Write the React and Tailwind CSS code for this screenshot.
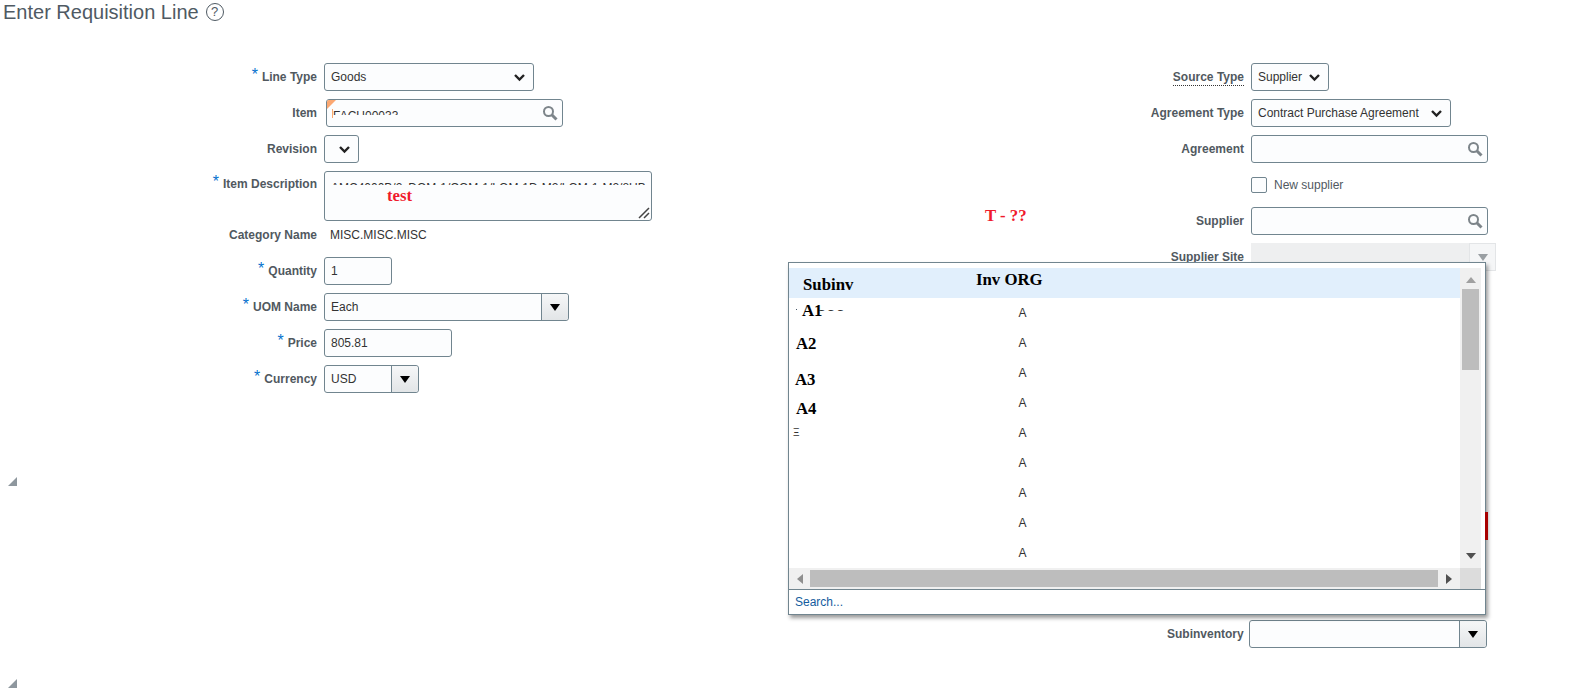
const ctl = "border border-[#71858f] rounded-[3px] bg-[#fcfdfe] h-[28px] flex items-center text-[12px] text-[#333]";

const Chevron = () => (
  <svg width="13" height="9" viewBox="0 0 13 9" className="shrink-0">
    <path d="M2 2 L6.5 6.5 L11 2" fill="none" stroke="#222" strokeWidth="2.4" />
  </svg>
);

const Magnifier = () => (
  <svg width="16" height="16" viewBox="0 0 16 16" className="shrink-0">
    <circle cx="6.5" cy="6.5" r="4.5" fill="none" stroke="#7d858a" strokeWidth="2" />
    <path d="M10 10 L14.5 14.5" stroke="#7d858a" strokeWidth="3" />
  </svg>
);

const Field = ({ label, required, dotted, children, labelClass = "pt-[6px]", className = "h-[28px]" }) => (
  <div className={`flex items-start gap-[7px] ${className}`}>
    <div className={`w-[317px] shrink-0 text-right text-[12px] leading-[16px] font-bold text-[#51595f] ${labelClass}`}>
      {required && <span className="text-[#0572ce] text-[16px] leading-[10px] font-normal mr-[4px] align-[1px]">*</span>}
      <span className={dotted ? "border-b border-dotted border-[#333] pb-[1px]" : ""}>{label}</span>
    </div>
    {children}
  </div>
);

const SelectBox = ({ value, w }) => (
  <div className={`${ctl} ${w} justify-between pl-[6px] pr-[7px]`}>
    <span>{value}</span>
    <Chevron />
  </div>
);

const SearchBox = ({ w, children }) => (
  <div className={`${ctl} ${w} relative justify-end pr-[4px] overflow-hidden`}>
    {children}
    <Magnifier />
  </div>
);

const Combo = ({ value, w }) => (
  <div className={`${ctl} ${w} pl-[6px]`}>
    <span className="flex-1">{value}</span>
    <div className="w-[27px] h-full shrink-0 border-l border-[#71858f] bg-gradient-to-b from-[#f6f7f8] to-[#e2e5e7] rounded-r-[3px] flex items-center justify-center">
      <span className="w-0 h-0 border-x-[5px] border-x-transparent border-t-[7px] border-t-black" />
    </div>
  </div>
);

const Corner = () => (
  <span className="block w-0 h-0 border-l-[9px] border-l-transparent border-b-[9px] border-b-[#8e979e]" />
);

const popupRows = ["A", "A", "A", "A", "A", "A", "A", "A", "A"];

const serifBold = "font-['Liberation_Serif',serif] font-bold text-[16.8px]";

export default function App() {
  return (
    <div className="relative h-[700px] w-[1578px] overflow-hidden bg-white font-['Liberation_Sans',Arial,sans-serif]">
      <div className="flex items-center h-[24px] pl-[3px]">
        <h1 className="text-[20px] leading-[24px] text-[#4f5a63]">Enter Requisition Line</h1>
        <span className="ml-[7px] w-[18px] h-[18px] rounded-full border-[1.5px] border-[#4f5a63] text-[#4f5a63] text-[13px] leading-[15px] text-center">?</span>
      </div>

      <div className="flex pt-[39px]">
        {/* left column */}
        <div className="w-[927px] flex flex-col gap-[8px]">
          <Field label="Line Type" required>
            <SelectBox value="Goods" w="w-[210px]" />
          </Field>
          <Field label="Item">
            <div className="ml-[2px]">
              <SearchBox w="w-[237px]">
                <span className="absolute left-0 top-0 w-0 h-0 border-r-[9px] border-r-transparent border-t-[9px] border-t-[#fba872]" />
                <span className="absolute left-[5px] top-[9px] w-[1px] h-[9px] bg-[#fba872]" />
                <span className="absolute left-[6px] top-[9px] text-[12px] h-[6px] overflow-hidden leading-[14px] text-[#333]">FACU00033</span>
              </SearchBox>
            </div>
          </Field>
          <Field label="Revision">
            <div className={`${ctl} w-[35px] justify-end pr-[7px]`}>
              <Chevron />
            </div>
          </Field>
          <Field label="Item Description" required labelClass="pt-[5px]" className="h-[50px]">
            <div className="relative w-[328px] h-[50px] border border-[#71858f] rounded-[3px] bg-[#fcfdfe] overflow-hidden">
              <div className="absolute left-[6px] top-[9px] h-[4px] overflow-hidden text-[12px] leading-[14px] text-[#333] whitespace-nowrap">AMC4000B/2xDOM-1/COM-1/LOM-1D-M2/LOM-1-M2/8UB</div>
              <svg className="absolute right-[1px] bottom-[1px]" width="12" height="12" viewBox="0 0 12 12">
                <path d="M1 11 L11 1 M6 11 L11 6" stroke="#444" strokeWidth="1.5" />
              </svg>
            </div>
          </Field>
          <Field label="Category Name" className="h-[28px] -mt-[8px]">
            <div className="pt-[6px] pl-[6px] text-[12px] leading-[16px] text-[#333]">MISC.MISC.MISC</div>
          </Field>
          <Field label="Quantity" required>
            <div className={`${ctl} w-[68px] pl-[6px]`}>1</div>
          </Field>
          <Field label="UOM Name" required>
            <Combo value="Each" w="w-[245px]" />
          </Field>
          <Field label="Price" required>
            <div className={`${ctl} w-[128px] pl-[6px]`}>805.81</div>
          </Field>
          <Field label="Currency" required>
            <Combo value="USD" w="w-[95px]" />
          </Field>
        </div>

        {/* right column */}
        <div className="flex flex-col gap-[8px]">
          <Field label="Source Type" dotted>
            <SelectBox value="Supplier" w="w-[78px]" />
          </Field>
          <Field label="Agreement Type">
            <SelectBox value="Contract Purchase Agreement" w="w-[200px]" />
          </Field>
          <Field label="Agreement">
            <SearchBox w="w-[237px]" />
          </Field>
          <div className="pl-[324px] h-[28px] flex items-center gap-[7px] text-[12px] text-[#51595f]">
            <span className="w-[16px] h-[16px] border border-[#71858f] rounded-[2px] bg-[#fcfdfe]" />
            New supplier
          </div>
          <Field label="Supplier">
            <SearchBox w="w-[237px]" />
          </Field>
          <Field label="Supplier Site">
            <div className="w-[245px] h-[28px] bg-[#eeeff0] flex justify-end">
              <div className="w-[27px] h-full bg-[#f5f6f7] border border-[#e3e5e7] flex items-center justify-center">
                <span className="w-0 h-0 border-x-[5px] border-x-transparent border-t-[7px] border-t-[#9a9fa3]" />
              </div>
            </div>
          </Field>
        </div>
      </div>

      {/* red notes typed over the shot */}
      <div className={`absolute left-[387px] top-[183px] text-[#f01a2c] ${serifBold}`}>test</div>
      <div className={`absolute left-[985px] top-[203px] text-[#f01a2c] ${serifBold}`}>T - ??</div>

      <div className="absolute left-[8px] top-[477px]"><Corner /></div>
      <div className="absolute left-[8px] top-[679px]"><Corner /></div>

      <div className="absolute left-[1167px] top-[620px] flex items-start gap-[5px]">
        <div className="pt-[6px] text-[12px] leading-[16px] font-bold text-[#51595f]">Subinventory</div>
        <Combo value="" w="w-[238px]" />
      </div>

      {/* dropdown popup */}
      <div className="absolute left-[788px] top-[262px] w-[698px] h-[353px] bg-white border border-[#71858f] shadow-[2px_3px_4px_rgba(0,0,0,0.4)] flex flex-col">
        <div className="flex-1 min-h-0 flex pt-[5px] pr-[4px]">
          <div className="flex-1 min-w-0 flex flex-col">
            <div className={`h-[30px] shrink-0 bg-[#e1effc] relative text-black ${serifBold}`}>
              <span className="absolute left-[14px] top-[4px]">Subinv</span>
              <span className="absolute left-[187px] -top-[1px]">Inv ORG</span>
            </div>
            <div className="flex-1 relative overflow-hidden">
              {popupRows.map((r, i) => (
                <div key={i} className="h-[30px] w-[467px] pt-[7px] text-center text-[12px] leading-[16px] text-[#333]">
                  {r}
                </div>
              ))}
              <span className="absolute left-[7px] top-[11px] w-[1px] h-[1px] bg-[#456]" />
              <span className="absolute left-[28px] top-[10px] h-[3px] overflow-hidden text-[12px] leading-[14px] text-[#333]">OOO</span>
              <span className={`absolute left-[13px] top-[0px] text-black ${serifBold}`}>A1</span>
              <span className={`absolute left-[7px] top-[33px] text-black ${serifBold}`}>A2</span>
              <span className={`absolute left-[6px] top-[69px] text-black ${serifBold}`}>A3</span>
              <span className={`absolute left-[7px] top-[98px] text-black ${serifBold}`}>A4</span>
              <span className="absolute left-[4px] top-[129px] text-[10px] leading-[12px] text-[#333]">Ξ</span>
            </div>
            <div className="h-[21px] shrink-0 bg-[#f0f0f0] flex items-center">
              <div className="w-[21px] flex justify-center">
                <span className="w-0 h-0 border-y-[5px] border-y-transparent border-r-[6px] border-r-[#8f8f8f]" />
              </div>
              <div className="w-[628px] h-[17px] bg-[#bdbdbd]" />
              <div className="flex-1 flex justify-center">
                <span className="w-0 h-0 border-y-[5px] border-y-transparent border-l-[6px] border-l-[#505050]" />
              </div>
            </div>
          </div>
          <div className="w-[21px] shrink-0 flex flex-col">
            <div className="flex-1 bg-[#f0f0f0] flex flex-col items-center">
              <span className="mt-[9px] mb-[6px] w-0 h-0 border-x-[5px] border-x-transparent border-b-[6px] border-b-[#a0a0a0]" />
              <div className="w-[17px] h-[81px] bg-[#bdbdbd]" />
              <span className="mt-auto mb-[9px] w-0 h-0 border-x-[5px] border-x-transparent border-t-[6px] border-t-[#505050]" />
            </div>
            <div className="h-[21px] shrink-0 bg-[#dcdcdc]" />
          </div>
        </div>
        <div className="h-[25px] shrink-0 border-t border-[#71858f] pl-[6px] flex items-center text-[12px] text-[#145c9e]">Search...</div>
      </div>

      <div className="absolute left-[1485px] top-[512px] w-[3px] h-[28px] bg-[#a80000]" />
    </div>
  );
}
